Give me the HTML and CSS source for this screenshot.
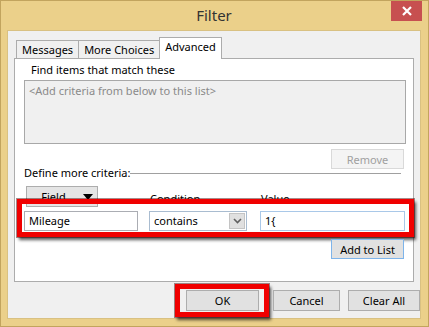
FILE: index.html
```html
<!DOCTYPE html>
<html>
<head>
    <title>Filter</title>
    <meta name="viewport" content="width=device-width, initial-scale=1">
    <link rel="stylesheet" href="styles.css">
</head>
<body>
    <div class="window">
        <div class="titlebar">
            <span class="title">Filter</span>
            <div class="close-btn">
                <svg width="10" height="10" viewBox="0 0 10 10"><path d="M1 1 L9 9 M9 1 L1 9" stroke="#fff" stroke-width="2.2"/></svg>
            </div>
        </div>
        <div class="client">
            <div class="tabs">
                <div class="tab">Messages</div>
                <div class="tab">More Choices</div>
                <div class="tab active">Advanced</div>
            </div>
            <div class="panel">
                <div class="section-title">Find items that match these</div>
                <div class="criteria-list">&lt;Add criteria from below to this list&gt;</div>
                <div class="right-row">
                    <div class="btn disabled">Remove</div>
                </div>
                <div class="define-row">
                    <span>Define more criteria:</span>
                    <span class="rule"></span>
                </div>
                <div class="criteria-grid">
                    <div class="btn field-btn">
                        <span>Field</span>
                        <svg width="10" height="6" viewBox="0 0 10 6"><path d="M0 0 H10 L5 6 Z" fill="#000"/></svg>
                    </div>
                    <div class="col-label">Condition</div>
                    <div class="col-label">Value</div>
                    <div class="textbox mileage">Mileage</div>
                    <div class="combo">
                        <span class="combo-text">contains</span>
                        <span class="combo-arrow">
                            <svg width="9" height="6" viewBox="0 0 9 6"><path d="M1 1 L4.5 4.5 L8 1" stroke="#606060" stroke-width="1.6" fill="none"/></svg>
                        </span>
                    </div>
                    <div class="textbox value focused">1{</div>
                    <div class="highlight row-highlight"></div>
                </div>
                <div class="right-row add-row">
                    <div class="btn">Add to List</div>
                </div>
            </div>
            <div class="dialog-buttons">
                <div class="btn ok-btn">OK<div class="highlight ok-highlight"></div></div>
                <div class="btn cancel-btn">Cancel</div>
                <div class="btn clear-btn">Clear All</div>
            </div>
        </div>
    </div>
</body>
</html>
```

FILE: styles.css
```css
body {
    margin: 0;
    font-family: 'Noto Sans', 'Open Sans', sans-serif;
    font-size: 11px;
    color: #000;
}

.window {
    width: 429px;
    height: 327px;
    box-sizing: border-box;
    background: #ebd08a;
    border: 1px solid #c2a45e;
    padding: 0 7px 7px 6px;
}

.titlebar {
    position: relative;
    height: 29px;
    display: flex;
    align-items: center;
    justify-content: center;
}

.title {
    font-size: 15px;
    color: #333;
    margin-top: -1px;
}

.close-btn {
    position: absolute;
    top: 0;
    right: -1px;
    width: 31px;
    height: 20px;
    background: #c75050;
    display: flex;
    align-items: center;
    justify-content: center;
}

.client {
    height: 289px;
    box-sizing: border-box;
    background: #f0f0f0;
    border: 1px solid #d9c182;
    padding: 7px 0 0 6px;
}

/* Tabs */
.tabs {
    display: flex;
    align-items: flex-end;
    height: 20px;
    padding-left: 2px;
}

.tab {
    height: 17px;
    line-height: 18px;
    padding: 0 5px;
    border: 1px solid #acacac;
    border-bottom: none;
    margin-right: -1px;
    background: #f0f0f0;
}

.tab.active {
    position: relative;
    z-index: 1;
    height: 21px;
    line-height: 18px;
    margin-bottom: -1px;
    background: #fff;
    padding: 0 5px;
}

.panel {
    position: relative;
    width: 400px;
    height: 224px;
    box-sizing: border-box;
    background: #fff;
    border: 1px solid #acacac;
    padding: 0 7px 0 9px;
}

.section-title {
    margin: 3px 0 0 7px;
    line-height: 16px;
}

.criteria-list {
    margin-top: 2px;
    height: 64px;
    box-sizing: border-box;
    background: #f0f0f0;
    border: 1px solid #a8a8a8;
    padding: 2px 4px;
    color: #8a8a8a;
    line-height: 16px;
}

.right-row {
    display: flex;
    justify-content: flex-end;
    padding-right: 2px;
    margin-top: 5px;
}

.btn {
    position: relative;
    height: 20px;
    box-sizing: border-box;
    background: #e1e1e1;
    border: 1px solid #adadad;
    display: flex;
    align-items: center;
    justify-content: center;
    width: 73px;
}

.btn.disabled {
    background: #f4f4f4;
    border-color: #d9d9d9;
    color: #a0a0a0;
}

.add-row {
    margin-top: 8px;
}

.add-row .btn {
    border-color: #7eb4ea;
}

.define-row {
    display: flex;
    align-items: center;
    margin-top: -3px;
    line-height: 14px;
    padding-right: 5px;
}

.rule {
    flex: 1;
    height: 1px;
    background: #a0a0a0;
    margin-top: 1px;
}

/* Criteria grid */
.criteria-grid {
    position: relative;
    margin-top: 6px;
    display: grid;
    grid-template-columns: 125px 111px 1fr;
    grid-template-rows: 21px 20px;
    row-gap: 4px;
}

.field-btn {
    width: 72px;
    height: 21px;
    margin-left: 2px;
    gap: 17px;
    padding-left: 10px;
    background: #e5e5e5;
}

.col-label {
    align-self: end;
    line-height: 16px;
    margin-left: 1px;
}

.textbox {
    height: 20px;
    box-sizing: border-box;
    border: 1px solid #abadb3;
    padding: 0 4px;
    line-height: 18px;
    background: #fff;
}

.mileage {
    width: 114px;
}

.value {
    width: 145px;
}

.textbox.focused {
    border-color: #a9c8e8;
}

.combo {
    width: 98px;
    height: 20px;
    box-sizing: border-box;
    border: 1px solid #a9bcd0;
    display: flex;
    padding: 1px;
}

.combo-text {
    flex: 1;
    line-height: 16px;
    padding-left: 3px;
}

.combo-arrow {
    width: 16px;
    background: #e0e0e0;
    border: 1px solid #c4c4c4;
    box-sizing: border-box;
    display: flex;
    align-items: center;
    justify-content: center;
}

/* Red annotation boxes */
.highlight {
    position: absolute;
    border: 5px solid #f00000;
    box-shadow: 0 0 0 1px rgba(60, 0, 0, 0.45), 2px 3px 3px rgba(0, 0, 0, 0.65);
    box-sizing: border-box;
    pointer-events: none;
}

.row-highlight {
    left: -7px;
    top: 13px;
    width: 397px;
    height: 38px;
}

/* Dialog buttons */
.dialog-buttons {
    display: flex;
    justify-content: flex-end;
    width: 406px;
    margin-top: 8px;
}

.dialog-buttons .btn {
    height: 21px;
}

.ok-btn {
    width: 73px;
}

.cancel-btn {
    width: 67px;
    margin-left: 14px;
}

.clear-btn {
    width: 72px;
    margin-left: 8px;
}

.ok-highlight {
    left: -12px;
    top: -7px;
    width: 94px;
    height: 33px;
}
```
